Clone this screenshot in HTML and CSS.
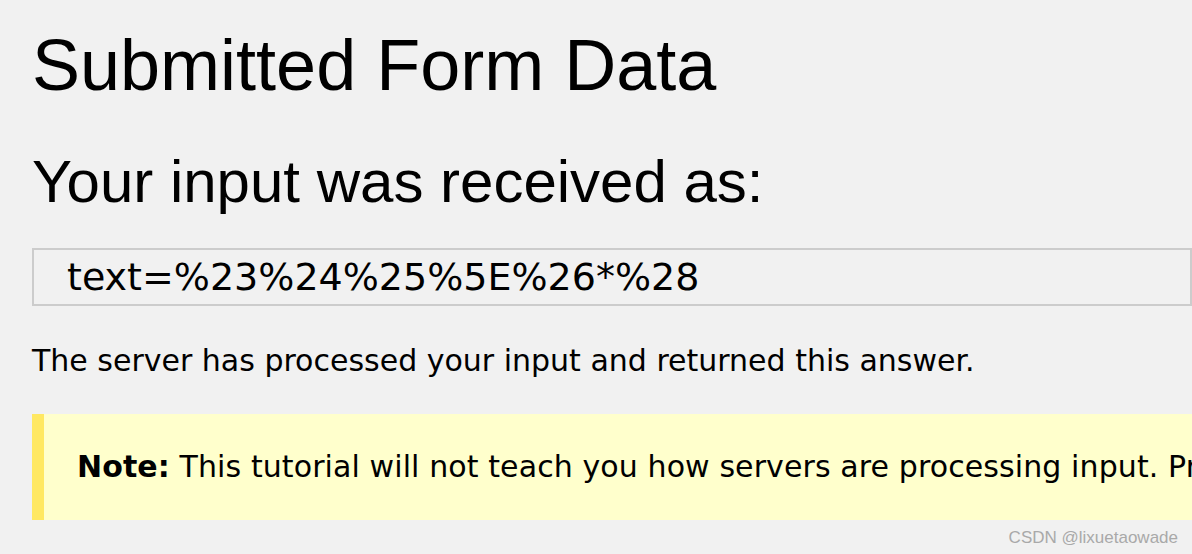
FILE: index.html
```html
<!DOCTYPE html>
<html lang="en">
<head>
    <meta charset="UTF-8">
    <title>Submitted Form Data</title>
    <link rel="stylesheet" href="styles.css">
</head>
<body>
    <div class="page">
        <h1>Submitted Form Data</h1>
        <h2>Your input was received as:</h2>
        <div class="received">text=%23%24%25%5E%26*%28</div>
        <p>The server has processed your input and returned this answer.</p>
        <div class="note">
            <p><b>Note:</b> This tutorial will not teach you how servers are processing input. Processing input is explained in our PHP tutorial.</p>
        </div>
    </div>
    <div class="watermark">CSDN @lixuetaowade</div>
</body>
</html>
```

FILE: styles.css
```css
body {
    margin: 0;
    background-color: #f1f1f1;
    font-family: "DejaVu Sans", Verdana, sans-serif;
    font-size: 30px;
    color: #000;
    overflow: hidden;
}
.page {
    padding: 22px 0 0 32px;
    white-space: nowrap;
}
h1 {
    font-family: "Liberation Sans", Arial, sans-serif;
    font-weight: normal;
    font-size: 72px;
    line-height: 86px;
    margin: 0 0 35px 0;
}
h2 {
    font-family: "Liberation Sans", Arial, sans-serif;
    font-weight: normal;
    font-size: 60px;
    line-height: 77px;
    margin: 0 0 28px 0;
}
.received {
    border: 2px solid #ccc;
    height: 54px;
    line-height: 54px;
    font-size: 38px;
    padding-left: 33px;
    margin-bottom: 33px;
}
p {
    margin: 0;
    line-height: 44px;
}
.note {
    margin-top: 31px;
    background-color: #ffffcc;
    border-left: 12px solid #ffe862;
    padding: 31px 33px;
}
.note p {
    letter-spacing: 0.1px;
}
.watermark {
    position: absolute;
    right: 14px;
    bottom: 6px;
    font-family: "Liberation Sans", Arial, sans-serif;
    font-size: 17px;
    color: #a9a9a9;
}
```
